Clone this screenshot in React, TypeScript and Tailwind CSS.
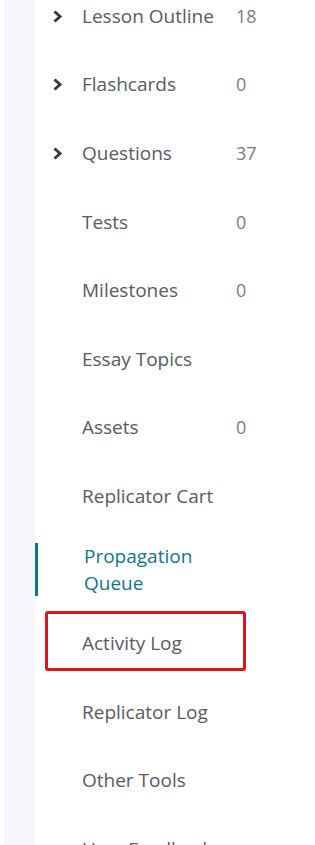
import React from "react";

type NavItem = {
  label: string;
  count?: number;
  expandable?: boolean;
  active?: boolean;
  highlighted?: boolean;
};

const items: NavItem[] = [
  { label: "Lesson Outline", count: 18, expandable: true },
  { label: "Flashcards", count: 0, expandable: true },
  { label: "Questions", count: 37, expandable: true },
  { label: "Tests", count: 0 },
  { label: "Milestones", count: 0 },
  { label: "Essay Topics" },
  { label: "Assets", count: 0 },
  { label: "Replicator Cart" },
  { label: "Propagation Queue", active: true },
  { label: "Activity Log", highlighted: true },
  { label: "Replicator Log" },
  { label: "Other Tools" },
  { label: "User Feedback" },
];

function Chevron() {
  return (
    <svg width="11" height="13" viewBox="0 0 11 13" className="text-[#3a3b40]">
      <path
        d="M2.5 1.5 L8 6.5 L2.5 11.5"
        fill="none"
        stroke="currentColor"
        strokeWidth="3"
        strokeLinecap="butt"
        strokeLinejoin="miter"
      />
    </svg>
  );
}

export default function App() {
  return (
    <div
      className="flex h-[845px] w-[315px] overflow-hidden bg-white"
      style={{ fontFamily: '"Open Sans", "Liberation Sans", sans-serif' }}
    >
      {/* left rail */}
      <div className="ml-[4px] w-[31px] shrink-0 bg-[#f5f6f9]" />

      {/* nav list */}
      <ul className="-mt-[5.5px] flex flex-1 flex-col gap-[25.6px]">
        {items.map((item) => (
          <li
            key={item.label}
            className={`relative flex items-center text-[19px] font-medium leading-[26.5px] ${
              item.active
                ? "border-l-[3px] border-[#137587] text-[#137587]"
                : "min-h-[43px] border-l-[3px] border-transparent text-[#595a64]"
            }`}
          >
            <span className="flex w-[44px] shrink-0 justify-end pr-[19px]">
              {item.expandable && <Chevron />}
            </span>
            <span
              className={`w-[154px] shrink-0 ${item.active ? "pl-[2px]" : ""}`}
            >
              {item.label}
            </span>
            {item.count !== undefined && (
              <span className="text-[18px] font-normal text-[#7b7c82]">
                {item.count}
              </span>
            )}
            {item.highlighted && (
              <span className="pointer-events-none absolute left-[7px] top-[-10.5px] h-[60px] w-[201px] rounded-[3px] border-[3px] border-[#e0141a]" />
            )}
          </li>
        ))}
      </ul>
    </div>
  );
}
